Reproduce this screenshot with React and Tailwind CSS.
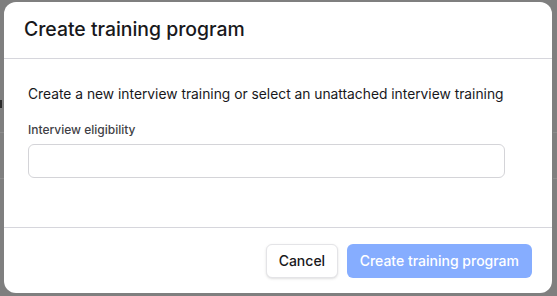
export default function App() {
  return (
    <div className="relative h-[296px] w-[557px] overflow-hidden bg-[#7f7f7f] pl-[4px] pt-[2px] font-['Inter',sans-serif]">
      {/* faint page content behind the overlay */}
      <div className="absolute left-0 top-[100px] h-[8px] w-[2px] bg-[#2a2a2a]" />
      <div className="absolute left-0 top-[132px] h-px w-[4px] bg-[#8c8c8c]" />
      <div className="absolute left-0 top-[178px] h-px w-[4px] bg-[#8c8c8c]" />
      <div className="absolute right-0 top-[132px] h-px w-[4px] bg-[#8c8c8c]" />
      <div className="absolute right-0 top-[178px] h-px w-[4px] bg-[#8c8c8c]" />

      <div className="relative flex h-[291px] w-[548px] flex-col rounded-xl bg-white">
        <div className="flex h-[57px] items-center border-b border-[#d6d6dc] px-5">
          <h2 className="text-[19.4px] font-medium text-[#18181b]">Create training program</h2>
        </div>
        <div className="flex-1 px-6 pt-[25px]">
          <p className="text-[13.8px] leading-5 text-[#18181b]">
            Create a new interview training or select an unattached interview training
          </p>
          <label className="mt-[18px] block text-[12px] font-medium leading-4 text-[#3f3f46]">
            Interview eligibility
          </label>
          <div className="mt-[6px] h-[34px] w-[477px] rounded-md border border-[#d4d4d8] bg-white" />
        </div>
        <div className="flex h-[66px] items-center justify-end gap-[9px] border-t border-[#d6d6dc] pr-5">
          <button className="h-[34px] rounded-md border border-[#e4e4e7] bg-white px-[11.5px] text-[14px] font-medium text-[#18181b] shadow-sm">
            Cancel
          </button>
          <button className="h-[34px] rounded-md bg-[#86adff] px-[13px] text-[14px] font-medium text-white">
            Create training program
          </button>
        </div>
      </div>
    </div>
  );
}
